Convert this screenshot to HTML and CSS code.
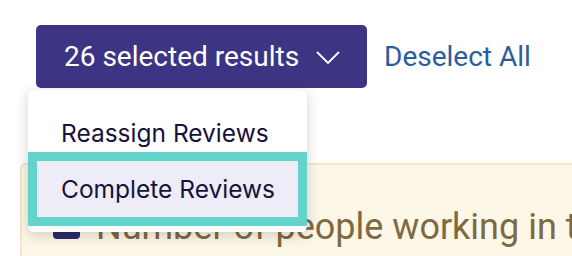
FILE: index.html
```html
<!DOCTYPE html>
<html>
<head>
<meta charset="utf-8">
<link rel="stylesheet" href="styles.css">
</head>
<body>
<div class="page">
  <div class="toolbar">
    <div class="select-wrap">
      <button class="select-btn">
        <span class="btn-label">26 selected results</span>
        <svg class="chev" width="24" height="14" viewBox="0 0 24 14"><path d="M1 1 L12 12 L23 1" fill="none" stroke="#fff" stroke-width="1.8"/></svg>
      </button>
      <div class="menu">
        <div class="menu-item">Reassign Reviews</div>
        <div class="menu-item focused">Complete Reviews</div>
      </div>
    </div>
    <a class="deselect">Deselect All</a>
  </div>
  <div class="card">
    <span class="checkbox"></span>
    <span class="card-text">Number of people working in the organization</span>
  </div>
</div>
</body>
</html>
```
FILE: styles.css
```css
html, body { margin: 0; padding: 0; background: #fff; }
.page { width: 572px; height: 256px; overflow: hidden; position: relative; }
.toolbar { display: flex; align-items: center; gap: 17px; padding: 25px 0 0 36px; height: 63px; }
.select-wrap { position: relative; }
.select-btn {
  display: flex; align-items: center; gap: 17px; white-space: nowrap;
  height: 63px; width: 331px; box-sizing: border-box;
  padding: 0 0 0 28px; border: none; border-radius: 5px;
  background: #3d3583; color: #fff;
  font-family: Roboto, "Liberation Sans", sans-serif; font-size: 28px;
}
.chev { margin-top: 2px; flex: none; }
.deselect { color: #2b5c9e; font-family: Roboto, "Liberation Sans", sans-serif; font-size: 28px; white-space: nowrap; }
.menu {
  position: absolute; left: -8px; top: 65px; z-index: 2;
  width: 279px; box-sizing: border-box; padding: 15px 0;
  background: #fff; border-radius: 6px;
  box-shadow: 0 3px 14px rgba(0,0,0,0.18);
}
.menu-item {
  height: 56px; display: flex; align-items: center; padding-left: 33px; white-space: nowrap;
  font-family: Inter, "Noto Sans", sans-serif; font-size: 24.5px; color: #15133a;
}
.menu-item.focused {
  background: #eeecf7; border: 9px solid #63d4cb;
  margin-top: -9px; margin-bottom: -9px; padding-left: 24px; height: 74px; box-sizing: border-box;
}
.card {
  margin: 75px 0 0 20px; height: 120px; box-sizing: border-box; overflow: hidden;
  background: #fcf7e6; border: 2px solid #f3e7c8; border-right: none; border-radius: 6px 0 0 6px;
  display: flex; align-items: flex-start; gap: 16px; padding: 44px 0 0 31px; white-space: nowrap;
}
.checkbox { width: 27px; height: 27px; border-radius: 4px; background: #2e2a6e; flex: none; margin-top: 3px; }
.card-text { font-family: Roboto, "Liberation Sans", sans-serif; font-size: 36px; color: #7e6a42; line-height: 36px; }
```
